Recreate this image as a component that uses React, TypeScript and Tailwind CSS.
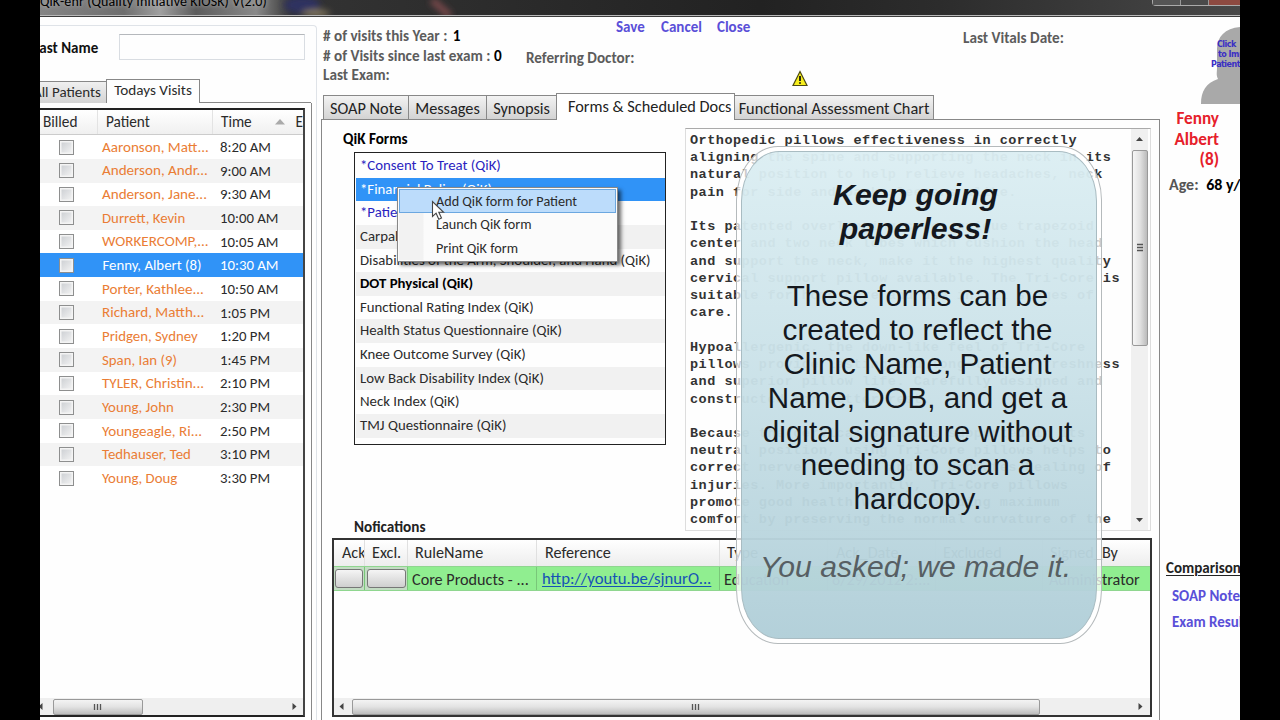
import React from 'react';
import clsx from 'clsx';

const patients = [
  { name: 'Aaronson, Matt...', time: '8:20 AM' },
  { name: 'Anderson, Andr...', time: '9:00 AM' },
  { name: 'Anderson, Jane...', time: '9:30 AM' },
  { name: 'Durrett, Kevin', time: '10:00 AM' },
  { name: 'WORKERCOMP,...', time: '10:05 AM' },
  { name: 'Fenny, Albert (8)', time: '10:30 AM', selected: true },
  { name: 'Porter, Kathlee...', time: '10:50 AM' },
  { name: 'Richard, Matth...', time: '1:05 PM' },
  { name: 'Pridgen, Sydney', time: '1:20 PM' },
  { name: 'Span, Ian (9)', time: '1:45 PM' },
  { name: 'TYLER, Christin...', time: '2:10 PM' },
  { name: 'Young, John', time: '2:30 PM' },
  { name: 'Youngeagle, Ri...', time: '2:50 PM' },
  { name: 'Tedhauser, Ted', time: '3:10 PM' },
  { name: 'Young, Doug', time: '3:30 PM' },
];

const forms = [
  { name: '*Consent To Treat (QiK)', style: 'text-[#2a1fc0]' },
  { name: '*Financial Policy (QiK)', style: 'bg-[#3093f7] text-white' },
  { name: '*Patient Information (QiK)', style: 'text-[#2a1fc0]' },
  { name: 'Carpal Tunnel (QiK)', style: 'bg-[#f1f1f1]' },
  { name: 'Disabilities of the Arm, Shoulder, and Hand (QiK)', style: '' },
  { name: 'DOT Physical (QiK)', style: 'bg-[#f1f1f1] font-bold text-black' },
  { name: 'Functional Rating Index (QiK)', style: '' },
  { name: 'Health Status Questionnaire (QiK)', style: 'bg-[#f1f1f1]' },
  { name: 'Knee Outcome Survey (QiK)', style: '' },
  { name: 'Low Back Disability Index (QiK)', style: 'bg-[#f1f1f1]' },
  { name: 'Neck Index (QiK)', style: '' },
  { name: 'TMJ Questionnaire (QiK)', style: 'bg-[#f1f1f1]' },
];

const article = `Orthopedic pillows effectiveness in correctly
aligning the spine and supporting the neck in its
natural position to help relieve headaches, neck
pain for side and back sleepers alike.

Its patented overlapping core, unique trapezoid
center and two neck lobes which cushion the head
and support the neck, make it the highest quality
cervical support pillow available. The Tri-Core is
suitable for home care and use in all stages of
care.

Hypoallergenic, the down-like feel of Tri-Core
pillows provide lasting and long lasting freshness
and superior pillow life. Carefully designed and
constructed for better rest.

Because the cervical spine is supported in its
neutral position, using Tri-Core pillows helps to
correct nerve function and it promotes healing of
injuries. More importantly, Tri-Core pillows
promote good health while providing maximum
comfort by preserving the normal curvature of the`;

const TitleBar = () => (
  <div className="relative h-[17px] shrink-0 overflow-hidden border-b border-[#3c3c3c] bg-[#242424]">
    <svg className="absolute inset-0" width="1200" height="16">
      <defs>
        <linearGradient id="glass" x1="0" x2="1">
          <stop offset="0" stopColor="#858585" />
          <stop offset="0.07" stopColor="#6e6e6e" />
          <stop offset="0.1" stopColor="#a0a0a0" />
          <stop offset="0.13" stopColor="#5c5c5c" />
          <stop offset="0.18" stopColor="#8a8a8a" />
          <stop offset="0.21" stopColor="#333" />
          <stop offset="0.6" stopColor="#222" />
          <stop offset="0.75" stopColor="#2c2c2c" />
          <stop offset="1" stopColor="#484848" />
        </linearGradient>
        <filter id="soft">
          <feGaussianBlur stdDeviation="3" />
        </filter>
      </defs>
      <rect width="1200" height="16" fill="url(#glass)" />
      <g filter="url(#soft)">
        <ellipse cx="262" cy="5" rx="18" ry="9" fill="#2e3260" />
        <ellipse cx="276" cy="13" rx="14" ry="3" fill="#8b7f62" />
        <path d="M392 0l18 16" stroke="#7a4a4c" strokeWidth="7" />
      </g>
    </svg>
    <div className="absolute top-[-6px] left-0 text-[14px] leading-4 tracking-[0.1px] whitespace-nowrap text-black [text-shadow:0_0_4px_#bbb]">
      QiK-ehr (Quality Initiative KIOSK) V(2.0)
    </div>
    <div className="absolute bottom-0 h-px w-full bg-[#b9b9b9]" />
    <div className="absolute top-0 left-[1112px] flex h-[6px] w-24 rounded-b border border-t-0 border-[#aaa]">
      <div className="w-[28px] border-r border-[#999] bg-[#555]" />
      <div className="w-[28px] border-r border-[#999] bg-[#4a4a4a]" />
      <div className="flex-1 bg-[#8d4a41]" />
    </div>
  </div>
);

const Arrow = ({ dir }: { dir: 'left' | 'right' | 'up' | 'down' }) => {
  const paths = {
    left: 'M6.500 2v7L2.500 5.500z',
    right: 'M3.500 2v7L7.500 5.500z',
    up: 'M2 7h7L5.500 3z',
    down: 'M2 4h7L5.500 8z',
  };
  return (
    <svg width="11" height="11" className="shrink-0">
      <path d={paths[dir]} fill="#444" />
    </svg>
  );
};

const Grip = () => (
  <svg width="10" height="8">
    <path d="M1.500 1v6M4.500 1v6M7.500 1v6" stroke="#555" strokeWidth="1.300" />
  </svg>
);

const Thumb = ({ className }: { className: string }) => (
  <div
    className={clsx(
      'flex h-4 items-center justify-center rounded-[2px] border border-[#999] bg-gradient-to-b from-[#f4f4f4] via-[#e2e2e2] to-[#bdbdbd]',
      className
    )}
  >
    <Grip />
  </div>
);

const PatientPanel = () => (
  <div className="flex w-[277px] shrink-0 flex-col pt-2">
    <div className="flex flex-1 flex-col rounded-tr border-t border-r border-[#dfe3e8]">
      <div className="flex h-[53px] items-start pt-2">
        <div className="-ml-[7px] w-[86px] pt-[5px] text-[15px] leading-[18px] font-bold whitespace-nowrap text-[#111]">
          Last Name
        </div>
        <div className="h-[26px] w-[186px] border border-[#d9dde2] border-t-[#b5b8bc]" />
      </div>
      <div className="flex h-[24px] items-end">
        <div className="h-[22px] w-[66px] border-t border-[#888] bg-gradient-to-b from-[#f0f0f0] to-[#d4d4d4] pt-[1px] text-[15px] leading-[18px]">
          <div className="-ml-[7px] whitespace-nowrap">All Patients</div>
        </div>
        <div className="h-full w-[94px] border border-b-0 border-[#888] text-center text-[15.200px] leading-[21px] whitespace-nowrap">
          Todays Visits
        </div>
        <div className="h-px w-[111px] bg-[#888]" />
      </div>
      <div className="mr-[4px] flex-1 border-r border-[#888] pt-[5px] pr-[6px]">
        <div className="flex h-[609px] flex-col border-2 border-l-0 border-[#222] border-r-[#444]">
          <div className="flex h-[25.200px] shrink-0 items-center overflow-hidden border-b border-[#ccc] bg-gradient-to-b from-white to-[#f0f0f0] text-[15.300px]">
            <div className="h-full w-[59px] border-r border-[#e3e3e3] pl-[3px] leading-[24px]">Billed</div>
            <div className="h-full w-[117px] border-r border-[#e3e3e3] pl-[8px] leading-[24px]">Patient</div>
            <div className="flex h-full w-[84px] items-center pl-[8px] leading-[24px]">
              <span className="w-[54px]">Time</span>
              <svg width="10" height="6">
                <path d="M0 5.500h10L5 0z" fill="#aaa" />
              </svg>
            </div>
            <div className="leading-[24px]">E</div>
          </div>
          {patients.map((p, i) => (
            <div
              key={p.name}
              className={clsx(
                'flex h-[23.670px] shrink-0 items-center text-[14.800px]',
                p.selected ? 'bg-[#3093f7] text-white' : i % 2 ? 'bg-[#f3f3f3]' : 'bg-white'
              )}
            >
              <div className="w-[62px] pl-[19px]">
                <div className="size-[15px] border border-[#8e8f8f] bg-gradient-to-br from-[#c9ccd0] to-[#f6f6f6] shadow-[inset_0_0_0_1.500px_#f4f4f4]" />
              </div>
              <div
                className={clsx(
                  'w-[118px] whitespace-nowrap',
                  p.selected ? 'pl-[0.500px]' : 'text-[#ea7d35]',
                  p.name.endsWith('...') && 'text-[15.100px]'
                )}
              >
                {p.name}
              </div>
              <div className="whitespace-nowrap">{p.time}</div>
            </div>
          ))}
          <div className="mt-auto flex h-[17px] items-center bg-[#efefef]">
            <div className="-ml-[4px]">
              <Arrow dir="left" />
            </div>
            <Thumb className="ml-[6px] w-[90px]" />
            <div className="mr-[3px] ml-auto">
              <Arrow dir="right" />
            </div>
          </div>
        </div>
      </div>
    </div>
  </div>
);

const VisitHeader = () => (
  <div className="flex h-[76px] shrink-0 text-[15.200px] font-bold text-[#5c5c5c]">
    <div className="w-[203px] pt-[10px] pl-[2px] leading-[19.500px] whitespace-nowrap">
      <div>
        # of visits this Year : <span className="ml-[2px] text-black">1</span>
      </div>
      <div>
        # of Visits since last exam : <span className="text-black">0</span>
      </div>
      <div>Last Exam:</div>
    </div>
    <div className="w-[439px] pt-[1px] pl-[2px]">
      <div className="flex pl-[90px] text-[15px] leading-[19px] text-[#5a4fd8]">
        <div className="w-[45px]">Save</div>
        <div className="w-[56px]">Cancel</div>
        <div>Close</div>
      </div>
      <div className="mt-[12px] leading-[19px]">Referring Doctor:</div>
      <svg className="mt-[2px] ml-[266px]" width="16" height="17">
        <path d="M8 1.500L15 15.500H1z" fill="#f7ee1c" stroke="#4d4a10" strokeWidth="1.200" />
        <path d="M8 6v5" stroke="#111" strokeWidth="1.800" />
        <path d="M8 12.200v1.600" stroke="#111" strokeWidth="1.800" />
      </svg>
    </div>
    <div className="pt-[12px] leading-[19px] whitespace-nowrap">Last Vitals Date:</div>
  </div>
);

const tab = 'h-[24px] border border-b-0 border-[#888] bg-gradient-to-b from-[#f3f3f3] to-[#d3d3d3] text-center leading-[24px] whitespace-nowrap';

const Tabs = () => (
  <div className="flex h-[26px] shrink-0 items-end pl-[2px] text-[16.300px] text-[#222]">
    <div className={clsx(tab, 'w-[86px]')}>SOAP Note</div>
    <div className={clsx(tab, 'w-[78px] border-l-0')}>Messages</div>
    <div className={clsx(tab, 'w-[69px] border-x-0')}>Synopsis</div>
    <div className="relative -mb-px h-[27px] w-[179px] border border-b-0 border-[#888] bg-white pl-[11px] leading-[24px] whitespace-nowrap">
      Forms &amp; Scheduled Docs
    </div>
    <div className={clsx(tab, 'w-[199px] border-l-0')}>Functional Assessment Chart</div>
  </div>
);

const Cursor = () => (
  <svg className="absolute top-[12px] left-[33px]" width="16" height="22">
    <path d="M1.500 1.500v15l3.600-3.300 2.700 6 2.700-1.200-2.700-5.700h4.800z" fill="#fff" stroke="#444" strokeWidth="1.100" />
  </svg>
);

const ContextMenu = () => (
  <div className="absolute top-[34px] left-[42px] h-[75px] w-[221px] border border-[#888] bg-[#fbfbfb] p-px text-[14.200px] leading-[23px] shadow-[3px_3px_4px_rgba(0,0,0,0.600)]">
    <div className="h-full bg-[linear-gradient(90deg,#f2f2f2_24px,#fbfbfb_25px)]">
      <div className="h-[24px] border border-[#6ba7e0] bg-[#bcdcfb] pl-[36px]">Add QiK form for Patient</div>
      <div className="h-[23.500px] pl-[37px]">Launch QiK form</div>
      <div className="pl-[37px]">Print QiK form</div>
    </div>
    <Cursor />
  </div>
);

const FormList = () => (
  <div className="w-[363px] pt-[10px] pl-[21px]">
    <div className="text-[15.200px] leading-[18px] font-bold text-black">QiK Forms</div>
    <div className="relative mt-[4px] ml-[11px] h-[293px] w-[312px] border border-[#222] pt-[1px] pl-[1px] text-[14.800px]">
      {forms.map((f) => (
        <div key={f.name} className={clsx('h-[23.640px] pl-[4px] leading-[23px] whitespace-nowrap', f.style)}>
          {f.name}
        </div>
      ))}
      <ContextMenu />
    </div>
  </div>
);

const Article = () => (
  <div className="mt-[8px] flex h-[403px] w-[466px] border border-[#ddd] border-t-[#aaa]">
    <pre className="w-[445px] pt-[3px] pl-[4px] font-['Liberation_Mono',monospace] text-[13.500px] leading-[17.230px] font-bold tracking-[0.500px] text-[#333]">
      {article}
    </pre>
    <div className="flex w-[17px] flex-col items-center bg-[#f0f0f0]">
      <div className="flex h-[21px] items-center">
        <Arrow dir="up" />
      </div>
      <div className="flex h-[196px] w-4 items-center justify-center rounded-[2px] border border-[#999] bg-gradient-to-r from-[#f6f6f6] via-[#e2e2e2] to-[#bbb]">
        <div className="rotate-90">
          <Grip />
        </div>
      </div>
      <div className="mt-auto mb-[5px]">
        <Arrow dir="down" />
      </div>
    </div>
  </div>
);

const headCell = 'h-full border-r border-[#e0e0e0] overflow-hidden whitespace-nowrap';
const rowCell = 'h-full border-r border-[#79c779] overflow-hidden whitespace-nowrap';
const rowButton = 'h-[19px] rounded-[3px] border border-[#777] bg-gradient-to-b from-[#f5f5f5] to-[#cfcfcf]';

const Notifications = () => (
  <div className="pt-[4px] pl-[10px]">
    <div className="-mt-[17px] pl-[22px] text-[15.200px] leading-[18px] font-bold text-[#222]">Nofications</div>
    <div className="mt-[2px] flex h-[179px] w-[820px] flex-col border-2 border-[#333] text-[16.200px]">
      <div className="flex h-[26px] shrink-0 bg-gradient-to-b from-white to-[#ededed] leading-[25px]">
        <div className={clsx(headCell, 'w-[31px] pl-[8px]')}>Ack</div>
        <div className={clsx(headCell, 'w-[43px] pl-[7px]')}>Excl.</div>
        <div className={clsx(headCell, 'w-[129px] pl-[7px]')}>RuleName</div>
        <div className={clsx(headCell, 'w-[183px] pl-[8px]')}>Reference</div>
        <div className={clsx(headCell, 'w-[108px] pl-[7px]')}>Type</div>
        <div className={clsx(headCell, 'w-[108px] pl-[8px]')}>Ack_Date</div>
        <div className={clsx(headCell, 'w-[107px] pl-[7px]')}>Excluded</div>
        <div className="pl-[7px]">Signed_By</div>
      </div>
      <div className="flex h-[25px] shrink-0 border-y border-[#8fd68f] bg-[#90ee90] leading-[25px]">
        <div className={clsx(rowCell, 'w-[31px] bg-[#c3dcc3] pt-[2px] pl-[1px]')}>
          <div className={clsx(rowButton, 'w-[28px]')} />
        </div>
        <div className={clsx(rowCell, 'w-[43px] bg-[#c3dcc3] pt-[2px] pl-[2px]')}>
          <div className={clsx(rowButton, 'w-[39px]')} />
        </div>
        <div className={clsx(rowCell, 'w-[129px] pl-[4px]')}>Core Products - ...</div>
        <div className={clsx(rowCell, 'w-[183px] pl-[5px] text-[16.700px] leading-[23px] text-[#1553b5] underline underline-offset-2')}>
          http://youtu.be/sjnurO...
        </div>
        <div className={clsx(rowCell, 'w-[108px] pl-[4px]')}>Education</div>
        <div className={clsx(rowCell, 'w-[108px] pl-[4px]')}>8/29/2012 2:...</div>
        <div className={clsx(rowCell, 'w-[107px]')} />
        <div className="pl-[6px]">Administrator</div>
      </div>
      <div className="mt-auto flex h-[17px] items-center bg-[#efefef]">
        <div className="w-[18px] pl-[3px]">
          <Arrow dir="left" />
        </div>
        <Thumb className="w-[688px]" />
        <div className="mr-[4px] ml-auto">
          <Arrow dir="right" />
        </div>
      </div>
    </div>
  </div>
);

const Sidebar = () => (
  <div className="flex-1 overflow-hidden pt-[10px] whitespace-nowrap">
    <div className="relative h-[78px] pl-[41px]">
      <svg width="39" height="78">
        <path d="M0 77c0-13 5-21 17-25-2-4-1-6-1-12V22C16 10 24 1 39 0v77z" fill="#a9a9a9" />
      </svg>
      <div className="absolute top-[13px] left-[51px] font-['DejaVu_Sans',sans-serif] text-[8px] leading-[10px] font-bold tracking-[-0.5px] text-[#3a2ec4]">
        <div className="pl-[6px]">Click</div>
        <div className="pl-[7px]">to Import</div>
        <div>Patient</div>
      </div>
    </div>
    <div className="w-[59px] pt-[4px] text-right text-[17.200px] leading-[20.500px] font-bold text-[#e6202a]">
      <div>Fenny</div>
      <div>Albert</div>
      <div>(8)</div>
    </div>
    <div className="pt-[4px] pl-[9px] text-[16px] leading-[19px] font-bold text-[#555]">
      Age: <span className="ml-[4px] text-black">68 y/o</span>
    </div>
    <div className="mt-[365px] pl-[6px] text-[15px] leading-[18px] font-bold text-[#222] underline underline-offset-2">
      Comparison
    </div>
    <div className="pt-[10px] pl-[12px] text-[15px] leading-[18px] font-bold text-[#5a4fd8]">SOAP Notes</div>
    <div className="pt-[8px] pl-[12px] text-[15px] leading-[18px] font-bold text-[#5a4fd8]">Exam Results</div>
  </div>
);

const Callout = () => (
  <div className="absolute top-[146px] left-[736px] h-[498px] w-[366px] rounded-[42px/54px] border border-[#b5babc] bg-white/75 p-[4px]">
    <div className="absolute inset-[4px] rounded-[38px/50px] border border-[#a9bcc2] bg-gradient-to-b from-[#d7ecf1]/85 via-[#c1dce4]/85 to-[#a6c8d3]/85" />
    <div className="relative pt-[27px] pr-[3px] text-center font-['Liberation_Sans',sans-serif] text-[29.600px] leading-[33.800px] whitespace-nowrap text-[#14181e]">
      <div className="pr-[4px] text-[30.300px] font-bold italic">
        <div>Keep going</div>
        <div>paperless!</div>
      </div>
      <div className="mt-[33.800px]">
        <div>These forms can be</div>
        <div>created to reflect the</div>
        <div>Clinic Name, Patient</div>
        <div>Name, DOB, and get a</div>
        <div>digital signature without</div>
        <div>needing to scan a</div>
        <div>hardcopy.</div>
      </div>
      <div className="mt-[33.800px] pr-[4px] text-[30.100px] text-[#575f63] italic">You asked; we made it.</div>
    </div>
  </div>
);

const App = () => (
  <div className="relative h-[720px] w-[1280px] overflow-hidden bg-black px-[40px] font-['Carlito','Lato',sans-serif] text-[14.800px] text-[#2b2b2b]">
    <div className="flex h-full flex-col overflow-hidden bg-[#fefefe]">
      <TitleBar />
      <div className="flex min-h-0 flex-1">
        <PatientPanel />
        <div className="ml-[4px] flex w-[839px] shrink-0 flex-col">
          <VisitHeader />
          <Tabs />
          <div className="flex-1 border border-b-0 border-[#888]">
            <div className="flex h-[411px]">
              <FormList />
              <Article />
            </div>
            <Notifications />
          </div>
        </div>
        <Sidebar />
      </div>
    </div>
    <Callout />
  </div>
);

export default App;
